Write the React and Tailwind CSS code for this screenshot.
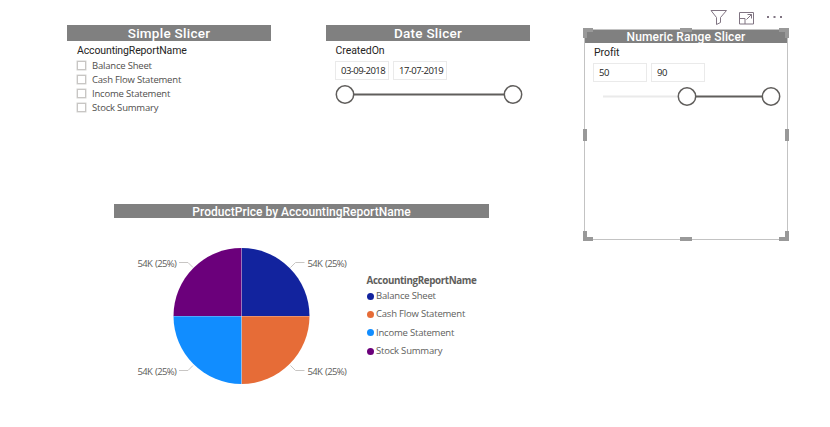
const reports = [
  { name: 'Balance Sheet', dot: 'bg-[#12239e]' },
  { name: 'Cash Flow Statement', dot: 'bg-[#e66c37]' },
  { name: 'Income Statement', dot: 'bg-[#118dff]' },
  { name: 'Stock Summary', dot: 'bg-[#6b007b]' },
];

const din = "font-['Roboto','Liberation_Sans',sans-serif]";

function RangeInput({ value }) {
  return (
    <input
      type="text"
      defaultValue={value}
      className="h-[19px] w-[54px] border border-[#eaeaea] bg-white pr-0 pl-[5px] text-[9.5px] tracking-[-0.55px] text-[#252423] outline-none"
    />
  );
}

function Slider({ from, children }) {
  return (
    <svg width="188" height="20" viewBox="0 0 188 20" className="block">
      {children}
      <line x1={from} y1="9.5" x2="178" y2="9.5" stroke="#605e5c" strokeWidth="2" />
      <circle cx={from} cy="9.5" r="8.7" fill="#fff" stroke="#605e5c" strokeWidth="1.5" />
      <circle cx="178" cy="9.5" r="8.7" fill="#fff" stroke="#605e5c" strokeWidth="1.5" />
    </svg>
  );
}

function SimpleSlicer() {
  return (
    <section className="ml-[67px] w-[204px] pt-[25px]">
      <h2 className={`${din} h-4 bg-[#808080] text-center text-[13.5px] leading-[17px] font-medium tracking-[0.27px] text-white`}>
        Simple Slicer
      </h2>
      <div className="pl-[10px]">
        <p className={`${din} pt-[2px] text-[10.5px] leading-4 -tracking-[0.13px] text-[#252423]`}>AccountingReportName</p>
        <ul>
          {reports.map(r => (
            <li key={r.name} className="flex h-[14px] items-center">
              <span className="mr-[6px] -mt-px size-[9px] border-[1.5px] border-[#c8c6c4] bg-white shadow-[0_0_0_0.5px_#d6d5d4]" />
              <span className="text-[9.5px] leading-[14px] tracking-[-0.2px] whitespace-nowrap text-[#504e4c]">{r.name}</span>
            </li>
          ))}
        </ul>
      </div>
    </section>
  );
}

function DateSlicer() {
  return (
    <section className="ml-[55px] w-[204px] pt-[25px]">
      <h2 className={`${din} h-4 bg-[#808080] text-center text-[13.5px] leading-[17px] font-medium tracking-[0.27px] text-white`}>
        Date Slicer
      </h2>
      <div className="pl-[9px]">
        <p className={`${din} pt-[2px] pl-[0.5px] text-[10.5px] leading-4 -tracking-[0.05px] text-[#252423]`}>CreatedOn</p>
        <div className="mt-[2px] flex gap-1">
          <RangeInput value="03-09-2018" />
          <RangeInput value="17-07-2019" />
        </div>
        <div className="mt-[5px]">
          <Slider from={10} />
        </div>
      </div>
    </section>
  );
}

function Toolbar() {
  return (
    <div className="flex h-[29px] items-start pt-[9px] pl-[126px]">
      <svg width="17" height="17" viewBox="0 0 17 17" fill="none" stroke="#807482" strokeWidth="1">
        <path d="M1 1.5h15.5L10.5 8.5v5L6.5 15.5v-7z" />
      </svg>
      <svg width="15" height="15" viewBox="0 0 15 15" fill="none" stroke="#807482" strokeWidth="1" className="mt-[2px] ml-[12px]">
        <path d="M.5 1.500h14v11.500H.5zM.5 7.500h5.500v5.500M8.500 3.500h4v4M12.500 3.500L7.500 8.500" />
      </svg>
      <svg width="16" height="4" viewBox="0 0 16 4" fill="#807482" className="mt-[6px] ml-[13px]">
        <rect x="0" y="1" width="2" height="2" />
        <rect x="6.5" y="1" width="2" height="2" />
        <rect x="13" y="1" width="2" height="2" />
      </svg>
    </div>
  );
}

const handles = [
  'top-[-2px] left-[-2px] h-1 w-[10px]',
  'top-[-2px] left-[-2px] h-[10px] w-1',
  'top-[-2px] left-[95px] h-1 w-3',
  'top-[-2px] right-[-2px] h-1 w-[10px]',
  'top-[-2px] right-[-2px] h-[10px] w-1',
  'top-[99px] left-[-2px] h-3 w-1',
  'top-[99px] right-[-2px] h-3 w-1',
  'bottom-[-2px] left-[-2px] h-1 w-[10px]',
  'bottom-[-2px] left-[-2px] h-[10px] w-1',
  'bottom-[-2px] left-[95px] h-1 w-3',
  'right-[-2px] bottom-[-2px] h-1 w-[10px]',
  'right-[-2px] bottom-[-2px] h-[10px] w-1',
];

function NumericSlicer() {
  return (
    <section className="ml-[54px] w-[204px]">
      <Toolbar />
      <div className="relative h-[211px] border border-[#c3c3c3]">
        {/* resize handles of the selected visual */}
        {handles.map(h => (
          <span key={h} className={`absolute bg-[#999999] ${h}`} />
        ))}
        <h2 className={`${din} relative h-[13px] text-center text-[12px] leading-[15px] font-medium tracking-[0.16px] text-white`}>
          <span className="absolute inset-x-0 top-0 -z-10 h-[13px] bg-[#808080]" />
          Numeric Range Slicer
        </h2>
        <div className="pl-2">
          <p className={`${din} pt-[2px] pl-px text-[10.5px] leading-4 -tracking-[0.05px] text-[#252423]`}>Profit</p>
          <div className="mt-[2px] flex gap-1">
            <RangeInput value="50" />
            <RangeInput value="90" />
          </div>
          <div className="mt-[5px]">
            <Slider from={94}>
              <line x1="10" y1="9.5" x2="94" y2="9.5" stroke="#eaeaea" strokeWidth="2" />
            </Slider>
          </div>
        </div>
      </div>
    </section>
  );
}

function PieChart() {
  return (
    <svg width="220" height="150" viewBox="130 241 220 150" className="ml-4 shrink-0 text-[9.5px]">
      <path d="M241.5 316V248A68 68 0 0 1 309.5 316Z" fill="#12239e" />
      <path d="M241.5 316H309.5A68 68 0 0 1 241.5 384Z" fill="#e66c37" />
      <path d="M241.5 316V384A68 68 0 0 1 173.5 316Z" fill="#118dff" />
      <path d="M241.5 316H173.5A68 68 0 0 1 241.5 248Z" fill="#6b007b" />
      <path d="M241.5 248v136M173.5 316.5h136" stroke="#fff" strokeOpacity=".25" />
      <g fill="none" stroke="#c8c6c4">
        <path d="M179 262.5h9l5 5" />
        <path d="M304.5 262.5h-9l-5 5" />
        <path d="M179 370.5h9l5-5" />
        <path d="M304.5 370.5h-9l-5-5" />
      </g>
      <g fill="#605e5c" className="tracking-[-0.65px] [word-spacing:1px]">
        <text x="137.5" y="267">54K (25%)</text>
        <text x="307.5" y="267">54K (25%)</text>
        <text x="137.5" y="375">54K (25%)</text>
        <text x="307.5" y="375">54K (25%)</text>
      </g>
    </svg>
  );
}

function PriceByReport() {
  return (
    <section className="-mt-9 ml-[114px] w-[375px]">
      <h2 className={`${din} h-[14px] bg-[#808080] text-center text-[12px] leading-[16px] font-medium tracking-[0.02px] text-white`}>
        ProductPrice by AccountingReportName
      </h2>
      <div className="mt-[23px] flex">
        <PieChart />
        <div className="mt-[32px] ml-[16.5px]">
          <p className="text-[9.8px] leading-4 font-bold tracking-[-0.38px] text-[#605e5c]">AccountingReportName</p>
          <ul className="-mt-[2px]">
            {reports.map(r => (
              <li key={r.name} className="flex h-[18.3px] items-center">
                <span className={`mr-[2.5px] size-[7px] rounded-full ${r.dot}`} />
                <span className="text-[9.5px] tracking-[-0.2px] whitespace-nowrap text-[#605e5c]">{r.name}</span>
              </li>
            ))}
          </ul>
        </div>
      </div>
    </section>
  );
}

export default function App() {
  return (
    <main className="isolate h-[427px] w-[830px] overflow-hidden bg-white font-['Open_Sans','Noto_Sans',sans-serif]">
      <div className="flex items-start">
        <SimpleSlicer />
        <DateSlicer />
        <NumericSlicer />
      </div>
      <PriceByReport />
    </main>
  );
}
